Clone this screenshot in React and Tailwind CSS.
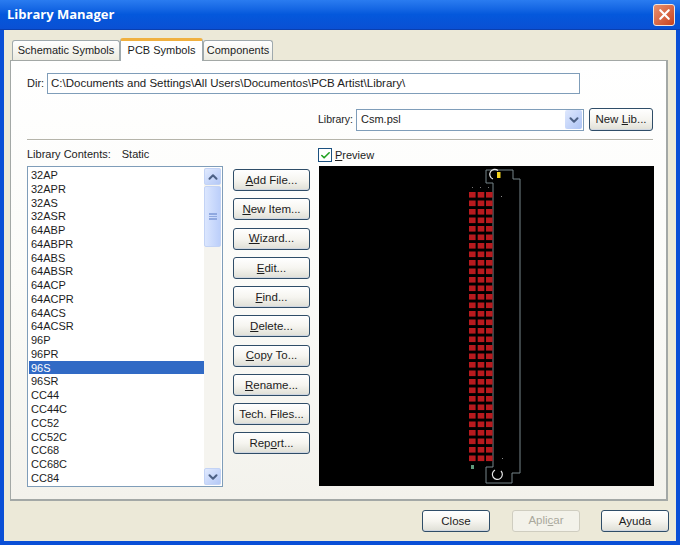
import { Check, ChevronDown, ChevronUp, X } from "lucide-react"

const symbols = [
  "32AP", "32APR", "32AS", "32ASR", "64ABP", "64ABPR", "64ABS", "64ABSR",
  "64ACP", "64ACPR", "64ACS", "64ACSR", "96P", "96PR", "96S", "96SR",
  "CC44", "CC44C", "CC52", "CC52C", "CC68", "CC68C", "CC84",
]

const actions = [
  ["", "A", "dd File..."],
  ["", "N", "ew Item..."],
  ["", "W", "izard..."],
  ["", "E", "dit..."],
  ["", "F", "ind..."],
  ["", "D", "elete..."],
  ["", "C", "opy To..."],
  ["", "R", "ename..."],
  ["Tech. Files...", "", ""],
  ["Rep", "o", "rt..."],
]

const rows = Array.from({ length: 32 }, (_, i) => i)

function XpButton({ className = "", disabled = false, children }) {
  if (disabled) {
    return (
      <button className={`flex items-center justify-center rounded-[3px] border border-[#cfcdc0] bg-[#f3f2ea] text-[11.5px] text-[#a9a89c] ${className}`}>
        {children}
      </button>
    )
  }
  return (
    <button className={`flex items-center justify-center rounded-[3px] border border-[#2f4d68] bg-gradient-to-b from-white via-[#f6f5f0] to-[#dfdfd6] pt-px text-[11.5px] text-[#1c1c1c] shadow-[inset_0_-1px_0_#cfd6e0] ${className}`}>
      {children}
    </button>
  )
}

function ScrollArrow({ children }) {
  return (
    <div className="flex h-[17px] w-[17px] items-center justify-center rounded-[2px] border border-[#c3d3f5] bg-gradient-to-br from-[#e1eafe] to-[#b4c8f6] text-[#4d6185]">
      {children}
    </div>
  )
}

function PcbPreview() {
  return (
    <svg viewBox="319 166 335 320" className="h-[320px] w-[335px] bg-black">
      <path d="M486 170H513V179H520V473H512V483H486V467H493V183H486Z" fill="none" stroke="#76858a" strokeWidth="1" />
      <path d="M498 170.5A5 5 0 1 0 493 179" fill="none" stroke="#e8e8e8" strokeWidth="1.2" />
      <rect x="497" y="172" width="3.5" height="6" fill="#f2d21e" />
      <path d="M501 471A5 5 0 1 1 495 470" fill="none" stroke="#e8e8e8" strokeWidth="1.2" />
      <rect x="471" y="465" width="3" height="4" fill="#5f9a7c" />
      <rect x="501" y="196" width="1" height="1" fill="#8a8a8a" />
      <rect x="502" y="458" width="1" height="1" fill="#8a8a8a" />
      {[472, 480, 488].map((x) => (
        <rect key={x} x={x} y="187" width="1" height="1" fill="#777777" />
      ))}
      {rows.map((r) =>
        [469, 477.7, 486].map((x) => (
          <rect key={`${r}-${x}`} x={x} y={192 + r * 8.5} width="6.6" height="5.6" fill="#b81a1e" />
        )),
      )}
    </svg>
  )
}

export default function App() {
  return (
    <div className="flex h-[545px] w-[680px] flex-col overflow-hidden bg-[#0a4fd6] font-['Liberation_Sans',sans-serif] text-[11px] text-[#1c1c1c]">
      <div className="flex h-[30px] shrink-0 items-center justify-between border-b border-[#0a3fb0] bg-gradient-to-b from-[#2a7cf0] via-[#0458dc] to-[#0a50d4] pl-[7px] pr-[5px]">
        <span className="font-['Open_Sans',sans-serif] text-[13px] font-bold text-white">Library Manager</span>
        <div className="flex h-[22px] w-[22px] items-center justify-center rounded-[3px] border border-[#f2e4dc] bg-gradient-to-br from-[#e8906e] to-[#c8401c]">
          <X size={17} strokeWidth={3} className="text-white" />
        </div>
      </div>

      <div className="mx-1 mb-1 flex min-h-0 flex-1 flex-col bg-[#ece9d8]">
        <div className="ml-[8px] flex h-[30px] items-end whitespace-nowrap pt-[8px]">
          <div className="flex h-[20px] w-[108px] items-center justify-center rounded-t-[3px] border border-b-0 border-[#9fa9ad] bg-gradient-to-b from-white to-[#ecebe0]">
            Schematic Symbols
          </div>
          <div className="relative z-10 -mb-px flex h-[23px] w-[83px] items-center justify-center rounded-t-[3px] border-x border-[#9fa9ad] border-t-[3px] border-t-[#f0b040] bg-white pb-[2px]">
            PCB Symbols
          </div>
          <div className="flex h-[20px] w-[70px] items-center justify-center rounded-t-[3px] border border-b-0 border-[#9fa9ad] bg-gradient-to-b from-white to-[#ecebe0]">
            Components
          </div>
        </div>

        <div className="ml-[6px] mr-[8px] flex h-[441px] flex-col border border-b-[2px] border-r-[2px] border-[#a3a8a6] bg-gradient-to-b from-white via-[#fbfbf8] to-[#f3f2ec] pl-[16px] pr-[12px] pt-[12px]">
          <div className="flex h-[21px] items-center">
            <span className="w-[20px]">Dir:</span>
            <div className="flex h-[21px] w-[533px] items-center border border-[#7f9db9] bg-white pl-[3px] text-[11.5px]">
              C:\Documents and Settings\All Users\Documentos\PCB Artist\Library\
            </div>
          </div>

          <div className="mt-[14px] flex h-[23px] items-center justify-end pr-px">
            <span className="mr-[3px] text-[10.5px]">Library:</span>
            <div className="flex h-[22px] w-[228px] items-center justify-between border border-[#7f9db9] bg-white pl-[4px] pr-px">
              Csm.psl
              <div className="flex h-[19px] w-[17px] items-center justify-center rounded-[2px] bg-gradient-to-br from-[#dfe8fd] to-[#aec4f5] text-[#4d6185]">
                <ChevronDown size={14} strokeWidth={3.5} />
              </div>
            </div>
            <XpButton className="ml-[5px] h-[23px] w-[64px]">
              New&nbsp;<u>L</u>ib...
            </XpButton>
          </div>

          <div className="mr-px mt-[8px] h-[2px] border-t border-[#b5b4aa] bg-white" />

          <div className="mt-[7px] flex gap-[9px]">
            <div className="w-[196px]">
              <div className="flex h-[18px] items-start leading-[12px]">
                <span>Library Contents:</span>
                <span className="ml-[11px]">Static</span>
              </div>
              <div className="flex h-[321px] border border-[#7f9db9] bg-white p-px">
                <div className="flex-1 overflow-hidden">
                  {symbols.map((name) => (
                    <div
                      key={name}
                      className={`h-[13.78px] pl-[2px] leading-[14px] ${name === "96S" ? "bg-[#316ac5] text-white" : ""}`}
                    >
                      {name}
                    </div>
                  ))}
                </div>
                <div className="flex w-[17px] flex-col justify-between bg-[#f5f4ef]">
                  <div>
                    <ScrollArrow>
                      <ChevronUp size={14} strokeWidth={3.5} />
                    </ScrollArrow>
                    <div className="mt-px flex h-[61px] w-[17px] items-center justify-center rounded-[2px] border border-[#c3d3f5] bg-gradient-to-r from-[#dbe6fe] to-[#bccffa]">
                      <div className="h-[7px] w-[8px] border-y border-[#8fa8e0] bg-[linear-gradient(#8fa8e0_1px,transparent_1px)] bg-[length:100%_2px]" />
                    </div>
                  </div>
                  <ScrollArrow>
                    <ChevronDown size={14} strokeWidth={3.5} />
                  </ScrollArrow>
                </div>
              </div>
            </div>

            <div className="flex w-[78px] flex-col gap-[7.25px] pl-px pt-[21px]">
              {actions.map(([before, key, after]) => (
                <XpButton key={before + key + after} className="h-[22px] w-[77px]">
                  <span>
                    {before}
                    {key && <u>{key}</u>}
                    {after}
                  </span>
                </XpButton>
              ))}
            </div>

            <div className="w-[335px]">
              <label className="-ml-px flex h-[18px] items-start gap-[3px] leading-[14px]">
                <span className="flex h-[14px] w-[14px] items-center justify-center border border-[#1c5180] bg-white">
                  <Check size={11} strokeWidth={3.5} className="text-[#21a121]" />
                </span>
                <span>
                  <u>P</u>review
                </span>
              </label>
              <PcbPreview />
            </div>
          </div>
        </div>

        <div className="flex flex-1 items-center justify-end pr-[7px]">
          <XpButton className="h-[22px] w-[68px]">Close</XpButton>
          <XpButton disabled className="ml-[22px] h-[22px] w-[68px]">
            <span>
              Apli<u>c</u>ar
            </span>
          </XpButton>
          <XpButton className="ml-[21px] h-[22px] w-[68px]">Ayuda</XpButton>
        </div>
      </div>
    </div>
  )
}
